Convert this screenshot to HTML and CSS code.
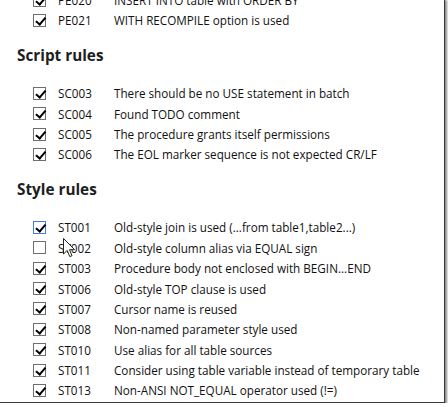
FILE: index.html
```html
<!DOCTYPE html>
<html>
<head>
<meta charset="utf-8">
<link rel="stylesheet" href="styles.css">
</head>
<body>
<div class="frame">
  <div class="content">
    <ul class="rules rules-top">
      <li class="rule"><span class="cb checked"></span><span class="code">PE020</span><span class="desc">INSERT INTO table with ORDER BY</span></li>
      <li class="rule"><span class="cb checked"></span><span class="code">PE021</span><span class="desc">WITH RECOMPILE option is used</span></li>
    </ul>
    <h2 class="heading">Script rules</h2>
    <ul class="rules">
      <li class="rule"><span class="cb checked"></span><span class="code">SC003</span><span class="desc">There should be no USE statement in batch</span></li>
      <li class="rule"><span class="cb checked"></span><span class="code">SC004</span><span class="desc">Found TODO comment</span></li>
      <li class="rule"><span class="cb checked"></span><span class="code">SC005</span><span class="desc">The procedure grants itself permissions</span></li>
      <li class="rule"><span class="cb checked"></span><span class="code">SC006</span><span class="desc">The EOL marker sequence is not expected CR/LF</span></li>
    </ul>
    <h2 class="heading">Style rules</h2>
    <ul class="rules">
      <li class="rule"><span class="cb checked hover"></span><span class="code">ST001</span><span class="desc">Old-style join is used (...from table1,table2...)</span></li>
      <li class="rule has-cursor"><span class="cb"></span><span class="code">ST002</span><span class="desc">Old-style column alias via EQUAL sign</span>
        <svg class="cursor" width="13" height="20" viewBox="0 0 13 20"><path d="M0.5 0.5 L0.5 16 L4.2 12.4 L6.8 18.6 L9 17.7 L6.5 11.7 L11.6 11.7 Z" fill="#fff" stroke="#222" stroke-width="1" stroke-linejoin="round"/></svg>
      </li>
      <li class="rule"><span class="cb checked"></span><span class="code">ST003</span><span class="desc">Procedure body not enclosed with BEGIN...END</span></li>
      <li class="rule"><span class="cb checked"></span><span class="code">ST006</span><span class="desc">Old-style TOP clause is used</span></li>
      <li class="rule"><span class="cb checked"></span><span class="code">ST007</span><span class="desc">Cursor name is reused</span></li>
      <li class="rule"><span class="cb checked"></span><span class="code">ST008</span><span class="desc">Non-named parameter style used</span></li>
      <li class="rule"><span class="cb checked"></span><span class="code">ST010</span><span class="desc">Use alias for all table sources</span></li>
      <li class="rule"><span class="cb checked"></span><span class="code">ST011</span><span class="desc">Consider using table variable instead of temporary table</span></li>
      <li class="rule"><span class="cb checked"></span><span class="code">ST013</span><span class="desc">Non-ANSI NOT_EQUAL operator used (!=)</span></li>
    </ul>
  </div>
</div>
</body>
</html>
```

FILE: styles.css
```css
html, body {
  margin: 0;
  padding: 0;
  background: #ffffff;
}
body {
  font-family: "Open Sans", "Noto Sans", "Liberation Sans", sans-serif;
  color: #111;
  overflow: hidden;
}
.frame {
  width: 444px;
  height: 402px;
  border-right: 1px solid #3a3a3a;
  border-bottom: 1px solid #3a3a3a;
  box-shadow: 1px 1px 2px 1px rgba(0,0,0,0.45);
  overflow: hidden;
  background: #fff;
}
.content {
  margin-top: -10.2px;
}
.rules {
  list-style: none;
  margin: 0;
  padding: 0;
}
.rule {
  position: relative;
  display: flex;
  align-items: center;
  height: 20.4px;
  padding-left: 33px;
  font-size: 11.7px;
  white-space: nowrap;
}
.cb {
  box-sizing: border-box;
  width: 13px;
  height: 13px;
  border: 1px solid #6e6e6e;
  background: #fff;
  flex: none;
  position: relative;
}
.cb.checked::after {
  content: "";
  position: absolute;
  left: 3.5px;
  top: 0px;
  width: 3.5px;
  height: 7.5px;
  border-right: 2px solid #000;
  border-bottom: 2px solid #000;
  transform: rotate(40deg);
}
.cb.hover {
  border-color: #3c7fe0;
}
.code {
  width: 56px;
  margin-left: 12px;
  flex: none;
}
.desc {
  flex: none;
}
.heading {
  margin: 13.5px 0 17px 17px;
  font-size: 15.3px;
  line-height: 22px;
  font-weight: 700;
  color: #1e1e1e;
}
.cursor {
  position: absolute;
  left: 63px;
  top: 0px;
}
```
